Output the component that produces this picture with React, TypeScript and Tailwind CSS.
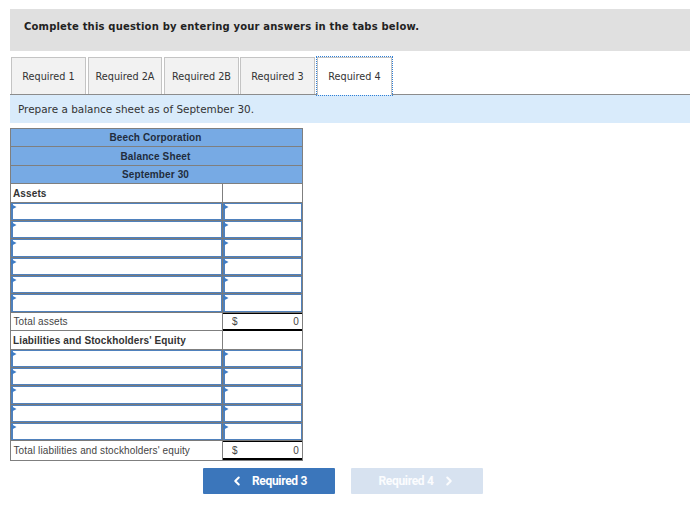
import React from "react";
import { ChevronLeft, ChevronRight } from "lucide-react";

const verdana = "font-['DejaVu_Sans',sans-serif]";
const arial = "font-['Liberation_Sans',sans-serif]";

function Tab({ label, w, active }: { label: string; w: string; active?: boolean }) {
  return (
    <div
      className={`${w} flex items-center justify-center pt-[2px] text-[9.7px] text-[#333] ${
        active
          ? "relative z-10 -mb-px h-[38px] border-x border-t border-[#c4c4c4] bg-white outline-1 outline-dotted outline-[#2f7fd6]"
          : "h-[37px] border-x border-t border-[#c4c4c4] bg-[#f2f2f2]"
      }`}
    >
      {label}
    </div>
  );
}

function Banner({ text }: { text: string }) {
  return (
    <div className="col-span-2 flex items-center justify-center border-b border-[#7f7f7f] bg-[#77aae4] pr-[2px] text-[10px] font-bold tracking-[0.12px] text-[#222d3d]">
      {text}
    </div>
  );
}

function Section({ text }: { text: string }) {
  return (
    <>
      <div className="flex items-center border-b border-r border-[#7f7f7f] pl-[2px] pt-[2px] text-[10px] font-bold tracking-[0.12px] text-[#333]">{text}</div>
      <div className="border-b border-[#7f7f7f]" />
    </>
  );
}

function InputCell({ right }: { right?: boolean }) {
  return (
    <div className={`relative border-b border-[#7a7a7a] ${right ? "" : "border-r border-r-[#7a7a7a]"} `}>
      <div className="h-full border-y border-l-2 border-r border-[#4f81bd] bg-white" />
      <svg className="absolute left-0 top-[1px]" width="6" height="6" viewBox="0 0 6 6">
        <path d="M0 0 L5.5 3 L0 6 Z" fill="#3f7cc4" />
      </svg>
    </div>
  );
}

function InputRow() {
  return (
    <>
      <InputCell />
      <InputCell right />
    </>
  );
}

function Total({ text, last }: { text: string; last?: boolean }) {
  return (
    <>
      <div className={`flex items-center border-r border-[#7f7f7f] pl-[2.5px] text-[10px] tracking-[0.12px] text-[#444] ${last ? "" : "border-b"}`}>{text}</div>
      <div className="flex items-center justify-between border-b-[2px] border-t border-b-black border-t-black pl-[9px] pr-[3px] text-[10px] tracking-[0.12px] text-[#444]">
        <span>$</span>
        <span>0</span>
      </div>
    </>
  );
}

export default function App() {
  return (
    <div className={`h-[516px] w-[697px] bg-white pl-[10px] pt-[9px] ${verdana}`}>
      <div className="flex h-[42px] w-[680px] items-center bg-[#e0e0e0] pb-[8px] pl-[14px] text-[10px] font-bold tracking-[0.18px] text-[#222]">
        Complete this question by entering your answers in the tabs below.
      </div>
      <div className="mt-[6px] flex w-[680px] gap-[2px] border-b border-[#8c8c8c] pl-[1px]">
        <Tab label="Required 1" w="w-[75px]" />
        <Tab label="Required 2A" w="w-[74px]" />
        <Tab label="Required 2B" w="w-[75px]" />
        <Tab label="Required 3" w="w-[75px] -ml-px" />
        <Tab label="Required 4" w="w-[75px]" active />
      </div>
      <div className="flex h-[28px] w-[680px] items-center bg-[#d9ebfb] pl-[8px] pt-[2px] text-[10.45px] text-[#333]">
        Prepare a balance sheet as of September 30.
      </div>
      <div className={`mt-[5px] grid w-[293px] auto-rows-[18.39px] grid-cols-[212px_1fr] border border-[#7f7f7f] ${arial}`}>
        <Banner text="Beech Corporation" />
        <Banner text="Balance Sheet" />
        <Banner text="September 30" />
        <Section text="Assets" />
        <InputRow />
        <InputRow />
        <InputRow />
        <InputRow />
        <InputRow />
        <InputRow />
        <Total text="Total assets" />
        <Section text="Liabilities and Stockholders' Equity" />
        <InputRow />
        <InputRow />
        <InputRow />
        <InputRow />
        <InputRow />
        <Total text="Total liabilities and stockholders' equity" last />
      </div>
      <div className="mt-[7px] flex gap-[16px] pl-[193px] font-['Roboto',sans-serif] text-[12px] font-bold tracking-[-0.3px] text-white">
        <div className="flex h-[26px] w-[132px] items-center justify-center gap-[8px] rounded-[1px] bg-[#3b76bb]">
          <ChevronLeft size={14} strokeWidth={3.5} className="-ml-px" />
          Required 3
        </div>
        <div className="flex h-[26px] w-[132px] items-center justify-center gap-[8px] rounded-[1px] bg-[#d7e2f0] text-white/90">
          Required 4
          <ChevronRight size={14} strokeWidth={3.5} />
        </div>
      </div>
    </div>
  );
}
